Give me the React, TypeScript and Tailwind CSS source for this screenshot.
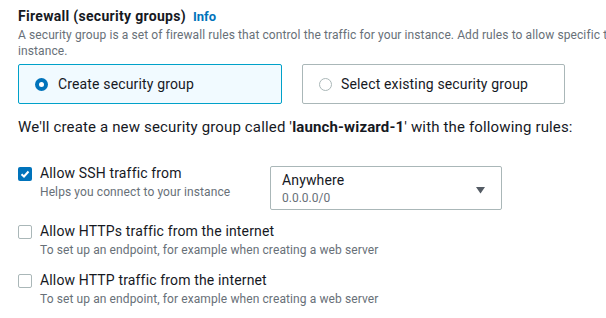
import React from "react";

function Radio({ checked }: { checked: boolean }) {
  return checked ? (
    <span className="block w-[13px] h-[13px] rounded-full bg-[#0073bb] flex items-center justify-center shrink-0">
      <span className="block w-[5px] h-[5px] rounded-full bg-white" />
    </span>
  ) : (
    <span className="block w-[13px] h-[13px] rounded-full border border-[#aab7b8] bg-white shrink-0" />
  );
}

function Checkbox({ checked }: { checked: boolean }) {
  return checked ? (
    <span className="flex w-[14px] h-[14px] rounded-[2px] bg-[#0073bb] items-center justify-center shrink-0">
      <svg width="10" height="10" viewBox="0 0 10 10">
        <path d="M1.5 5.2 L4 7.5 L8.5 2.5" fill="none" stroke="white" strokeWidth="2" />
      </svg>
    </span>
  ) : (
    <span className="block w-[14px] h-[14px] rounded-[2px] border border-[#aab7b8] bg-white shrink-0" />
  );
}

function Rule({ label, sub, checked, children }: { label: string; sub: string; checked: boolean; children?: React.ReactNode }) {
  return (
    <div className="flex items-start">
      <div className="w-[252px] flex items-start shrink-0">
        <div className="mt-[4px]">
          <Checkbox checked={checked} />
        </div>
        <div className="ml-[8px] whitespace-nowrap">
          <div className="text-[14px] leading-[20px] text-[#16191f] tracking-[0.15px]">{label}</div>
          <div className="text-[12px] leading-[16px] text-[#687078] mt-[1px] tracking-[0.1px]">{sub}</div>
        </div>
      </div>
      {children}
    </div>
  );
}

export default function App() {
  return (
    <div
      className="w-[606px] h-[318px] overflow-hidden bg-white pl-[18px] pt-[5px]"
      style={{ fontFamily: "Roboto, 'Liberation Sans', sans-serif" }}
    >
      <div className="flex items-baseline whitespace-nowrap h-[22px]">
        <span className="text-[14px] font-bold text-[#16191f] leading-[22px] tracking-[0.3px]">Firewall (security groups)</span>
        <span className="text-[13px] font-bold text-[#0073bb] ml-[7px]">Info</span>
      </div>
      <div className="text-[12px] leading-[16px] text-[#687078] whitespace-nowrap tracking-[0.1px]">
        A security group is a set of firewall rules that control the traffic for your instance. Add rules to allow specific traffic to reach your
        <br />
        instance.
      </div>
      <div className="flex gap-[20px] mt-[5px]">
        <div className="w-[264px] h-[40px] border border-[#00a1c9] bg-[#f1faff] rounded-[2px] flex items-center pl-[16px] gap-[10px]">
          <Radio checked={true} />
          <span className="text-[14px] text-[#16191f] whitespace-nowrap tracking-[0.15px]">Create security group</span>
        </div>
        <div className="w-[263px] h-[40px] border border-[#aab7b8] bg-white rounded-[2px] flex items-center pl-[16px] gap-[9px]">
          <Radio checked={false} />
          <span className="text-[14px] text-[#16191f] whitespace-nowrap tracking-[0.15px]">Select existing security group</span>
        </div>
      </div>
      <div className="mt-[13px] text-[15px] leading-[20px] text-[#16191f] whitespace-nowrap tracking-[0.15px]">
        We'll create a new security group called '<span className="font-bold">launch-wizard-1</span>' with the following rules:
      </div>
      <div className="mt-[26px]">
        <Rule label="Allow SSH traffic from" sub="Helps you connect to your instance" checked={true}>
          <div className="mt-[3px] w-[232px] h-[44px] border border-[#aab7b8] rounded-[2px] flex items-center justify-between pl-[11px] pr-[16px]">
            <div className="whitespace-nowrap">
              <div className="text-[14px] leading-[20px] text-[#16191f] tracking-[0.15px]">Anywhere</div>
              <div className="text-[12px] leading-[16px] text-[#687078]">0.0.0.0/0</div>
            </div>
            <svg width="9" height="7" viewBox="0 0 9 7" className="mt-[4px]">
              <path d="M0 0 H9 L4.5 6.5 Z" fill="#545b64" />
            </svg>
          </div>
        </Rule>
      </div>
      <div className="mt-[11px]">
        <Rule label="Allow HTTPs traffic from the internet" sub="To set up an endpoint, for example when creating a web server" checked={false} />
      </div>
      <div className="mt-[12px]">
        <Rule label="Allow HTTP traffic from the internet" sub="To set up an endpoint, for example when creating a web server" checked={false} />
      </div>
    </div>
  );
}
